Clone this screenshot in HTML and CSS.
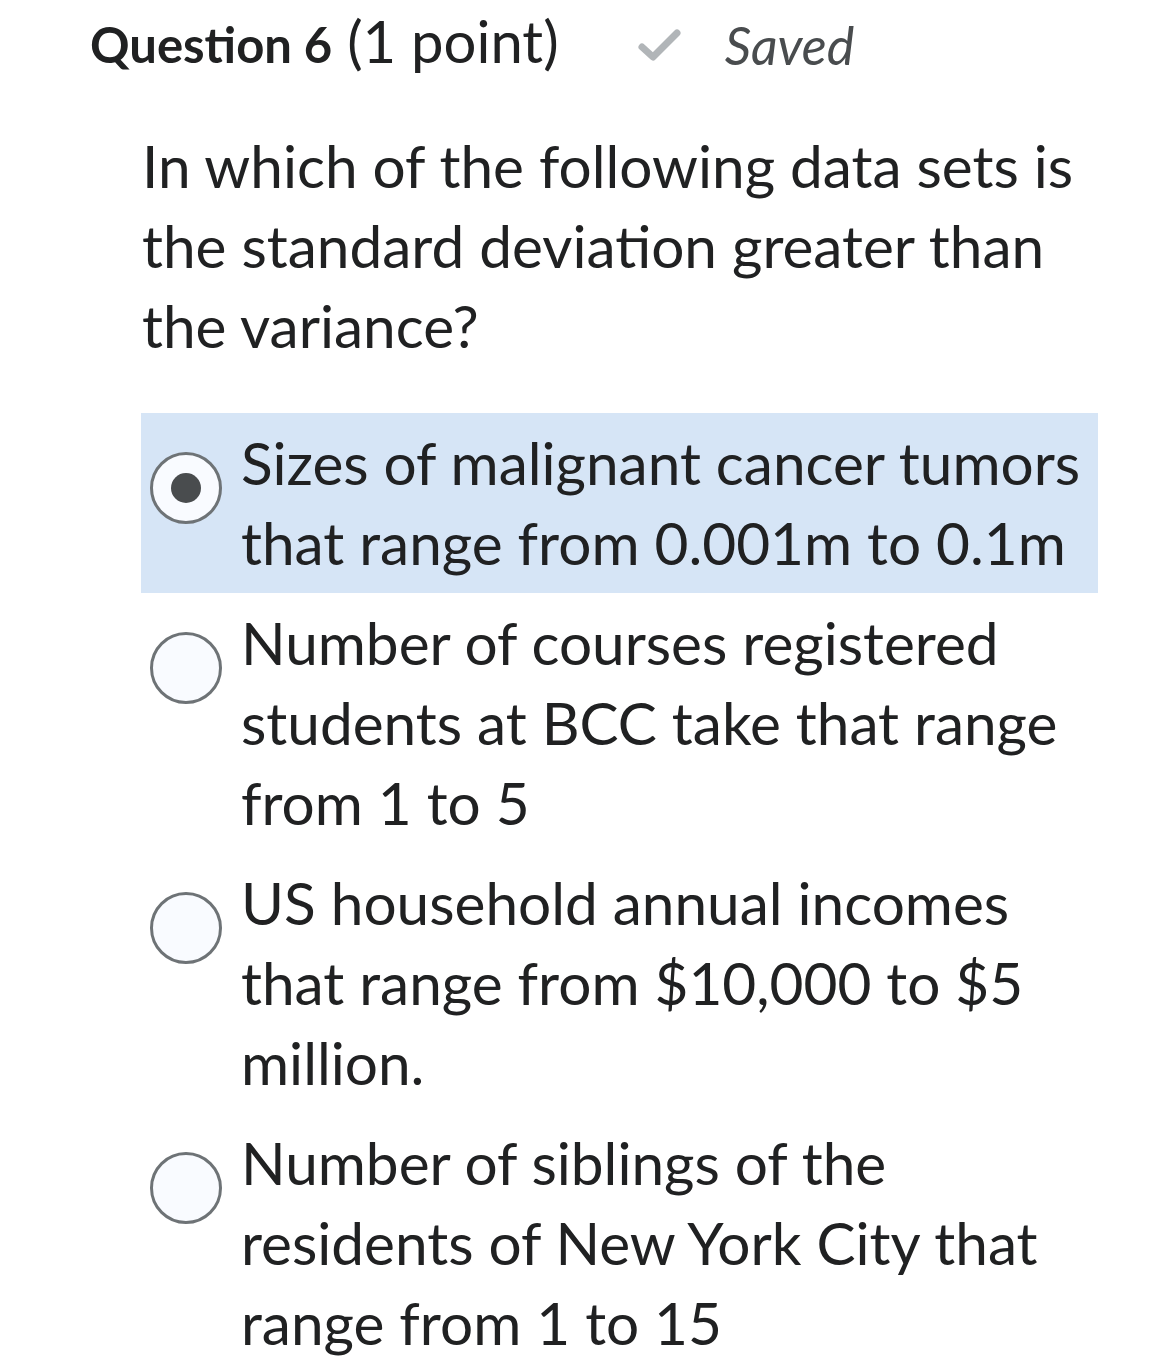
FILE: index.html
```html
<!DOCTYPE html>
<html lang="en">
<head>
<meta charset="utf-8">
<title>Question 6</title>
<link rel="stylesheet" href="styles.css">
</head>
<body>
<div class="page">
  <div class="header">
    <h2 class="title"><span class="qnum">Question 6</span> <span class="points">(1 point)</span></h2>
    <div class="status">
      <svg class="check" width="46" height="34" viewBox="0 0 46 34" aria-hidden="true">
        <path d="M5 19 L16 29 L40 5" fill="none" stroke="#b1b5b8" stroke-width="7" stroke-linecap="round" stroke-linejoin="round"/>
      </svg>
      <span class="saved">Saved</span>
    </div>
  </div>
  <div class="question">In which of the following data sets is the standard deviation greater than the variance?</div>
  <div class="options">
    <label class="option selected">
      <span class="radio checked"><span class="dot"></span></span>
      <span class="text">Sizes of malignant cancer tumors that range from 0.001m to 0.1m</span>
    </label>
    <label class="option">
      <span class="radio"></span>
      <span class="text">Number of courses registered students at BCC take that range from 1 to 5</span>
    </label>
    <label class="option">
      <span class="radio"></span>
      <span class="text">US household annual incomes that range from $10,000 to $5 million.</span>
    </label>
    <label class="option">
      <span class="radio"></span>
      <span class="text">Number of siblings of the residents of New York City that range from 1 to 15</span>
    </label>
  </div>
</div>
</body>
</html>
```
FILE: styles.css
```css
html, body {
  margin: 0;
  padding: 0;
  background: #ffffff;
}
body {
  font-family: Lato, "Open Sans", sans-serif;
  color: #202122;
}
.page {
  padding: 6px 0 0 90px;
  width: 1010px;
}
.header {
  display: flex;
  align-items: center;
  height: 72px;
}
.title {
  margin: 0;
  font-size: 58px;
  font-weight: 400;
  white-space: nowrap;
  color: #202122;
  line-height: 72px;
}
.qnum {
  font-weight: 700;
  font-size: 49px;
}
.status {
  display: flex;
  align-items: center;
  margin-left: 78px;
  padding-top: 6px;
}
.check {
  display: block;
}
.saved {
  margin-left: 42px;
  font-style: italic;
  font-size: 52px;
  color: #494c4e;
}
.question {
  margin: 47px 0 0 52px;
  font-size: 58.5px;
  line-height: 80px;
  width: 958px;
}
.options {
  margin: 48px 0 0 51px;
  width: 957px;
  display: flex;
  flex-direction: column;
}
.option {
  display: flex;
  align-items: flex-start;
  padding: 9px 8px 11px 9px;
}
.option.selected {
  background: #d6e5f6;
}
.radio {
  flex: none;
  width: 66px;
  height: 66px;
  margin-top: 30px;
  border: 3px solid #6e7376;
  border-radius: 50%;
  background: #f9fbff;
  display: flex;
  align-items: center;
  justify-content: center;
}
.dot {
  width: 30px;
  height: 30px;
  border-radius: 50%;
  background: #494c4e;
}
.text {
  margin-left: 19px;
  font-size: 58.5px;
  line-height: 80px;
}
```
